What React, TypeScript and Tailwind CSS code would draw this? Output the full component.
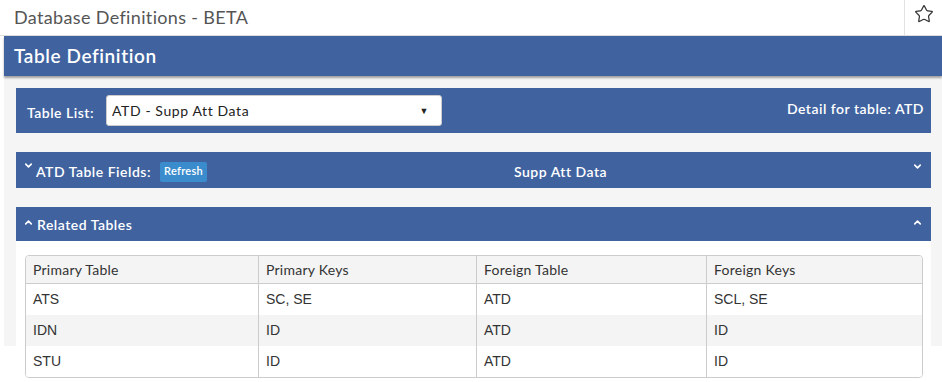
import { ChevronDown, ChevronUp, Star } from "lucide-react";

const rows = [
  ["ATS", "SC, SE", "ATD", "SCL, SE"],
  ["IDN", "ID", "ATD", "ID"],
  ["STU", "ID", "ATD", "ID"],
];

const heads = ["Primary Table", "Primary Keys", "Foreign Table", "Foreign Keys"];

const gothic = "font-['Lato','Open_Sans',sans-serif]";

export default function App() {
  return (
    <div className={`w-[942px] h-[382px] overflow-hidden bg-white ${gothic}`}>
      <div className="flex h-[36px] border-b border-[#dcdcdc]">
        <div className="flex-1 pl-[14px] pt-[4px] text-[18px] text-[#555] tracking-[0.35px]">
          Database Definitions - BETA
        </div>
        <div className="w-[38px] border-l border-[#e2e2e2] flex items-start justify-center pt-[4px]">
          <Star size={20} strokeWidth={1.5} className="text-[#333]" />
        </div>
      </div>
      <div className="pl-[4px]">
        <div className="h-[40px] bg-[#4063a0] shadow-[0_2px_2px_rgba(0,0,0,0.35)] relative flex items-center pl-[10px] text-[19px] font-semibold text-white tracking-[0.6px]">
          Table Definition
        </div>
        <div className="bg-[#f5f5f5] pt-[12px] pl-[12px] pr-[11px] h-[270px]">
          <div className="h-[45px] bg-[#4063a0] flex items-start pl-[11px] pr-[7px] text-white text-[14px] font-semibold tracking-[0.5px]">
            <span className="mt-[14px] w-[79px]">Table List:</span>
            <div className="mt-[7px] w-[336px] h-[31px] bg-white border border-[#ccc] rounded-[3px] flex items-center justify-between pl-[5px] pr-[12px] text-[#222] font-normal text-[14px] tracking-[0.6px]">
              <span>ATD - Supp Att Data</span>
              <span className="text-[9px] text-[#222]">▼</span>
            </div>
            <span className="ml-auto mt-[10px]">Detail for table: ATD</span>
          </div>
          <div className="mt-[19px] h-[36px] bg-[#4063a0] flex items-center pt-[3px] pl-[7px] pr-[8px] text-white text-[14px] font-semibold tracking-[0.5px]">
            <ChevronDown size={11} strokeWidth={3.5} className="self-start mt-[5px]" />
            <span className="ml-[2px] w-[116px]">ATD Table Fields:</span>
            <span className="ml-[8px] bg-[#3b8ccc] text-[11px] font-semibold tracking-[0.3px] w-[47px] h-[20px] flex items-center justify-center rounded-[2px]">
              Refresh
            </span>
            <span className="ml-[307px]">Supp Att Data</span>
            <ChevronDown size={11} strokeWidth={3.5} className="ml-auto self-start mt-[6px]" />
          </div>
          <div className="mt-[19px] bg-white">
            <div className="h-[34px] bg-[#4063a0] flex items-center pl-[7px] pr-[8px] text-white text-[14px] font-semibold tracking-[0.5px]">
              <ChevronUp size={11} strokeWidth={3.5} className="self-start mt-[10px]" />
              <span className="ml-[3px]">Related Tables</span>
              <ChevronUp size={11} strokeWidth={3.5} className="ml-auto self-start mt-[10px]" />
            </div>
            <div className="pt-[14px] pl-[9px] pr-[8px] pb-[10px]">
              <div className="border border-[#ccc] rounded-[4px] overflow-hidden">
                <div className="grid grid-cols-[232px_218px_230px_1fr] h-[28px] bg-[#f4f4f4] text-[14px] text-[#333] border-b border-[#ccc] tracking-[0.25px]">
                  {heads.map((h, i) => (
                    <div key={h} className={`flex items-center pl-[7px] ${i > 0 ? "border-l border-[#ccc]" : ""}`}>
                      {h}
                    </div>
                  ))}
                </div>
                {rows.map((r, ri) => (
                  <div
                    key={ri}
                    className={`grid grid-cols-[232px_218px_230px_1fr] h-[31px] text-[14px] text-[#333] font-['Liberation_Sans',sans-serif] ${ri % 2 === 1 ? "bg-[#f4f4f4]" : "bg-white"}`}
                  >
                    {r.map((c, i) => (
                      <div key={i} className={`flex items-center pl-[7px] ${i > 0 ? "border-l border-[#ccc]" : ""}`}>
                        {c}
                      </div>
                    ))}
                  </div>
                ))}
              </div>
            </div>
          </div>
        </div>
      </div>
    </div>
  );
}
